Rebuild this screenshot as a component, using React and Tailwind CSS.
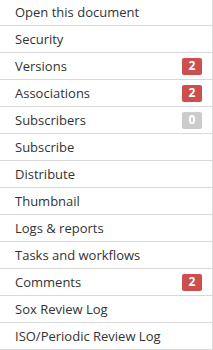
const items = [
  { label: 'Open this document' },
  { label: 'Security' },
  { label: 'Versions', count: 2 },
  { label: 'Associations', count: 2 },
  { label: 'Subscribers', count: 0 },
  { label: 'Subscribe' },
  { label: 'Distribute' },
  { label: 'Thumbnail' },
  { label: 'Logs & reports' },
  { label: 'Tasks and workflows' },
  { label: 'Comments', count: 2 },
  { label: 'Sox Review Log' },
  { label: 'ISO/Periodic Review Log' },
];

export default function App() {
  return (
    <div className="w-[213px] h-[350px] overflow-hidden bg-white">
      <ul className="-mt-[1px] border-r border-[#dcdcdc] font-['Open_Sans',sans-serif] text-[13px] text-[#333333]">
        {items.map((item) => (
          <li
            key={item.label}
            className="h-[27px] flex items-center justify-between pl-[15px] pr-[10px] border-b border-[#d9d9d9]"
          >
            <span className="leading-none pt-[1px]">{item.label}</span>
            {item.count !== undefined && (
              <span
                className={`w-[20px] h-[17px] flex items-center justify-center rounded-[2px] text-[12px] font-bold text-white ${
                  item.count > 0 ? 'bg-[#cd4f4d]' : 'bg-[#cccccc]'
                }`}
              >
                {item.count}
              </span>
            )}
          </li>
        ))}
      </ul>
    </div>
  );
}
